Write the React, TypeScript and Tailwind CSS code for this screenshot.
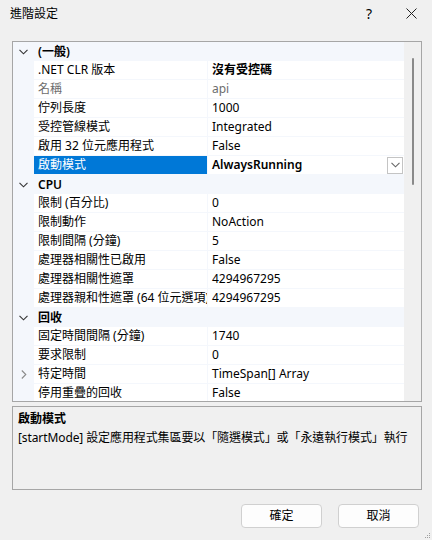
import React from 'react';

type Row =
  | { kind: 'cat'; title: string }
  | { kind: 'prop'; label: string; value: string; bold?: boolean; dim?: boolean; selected?: boolean; expandable?: boolean };

const rows: Row[] = [
  { kind: 'cat', title: '(一般)' },
  { kind: 'prop', label: '.NET CLR 版本', value: '沒有受控碼', bold: true },
  { kind: 'prop', label: '名稱', value: 'api', dim: true },
  { kind: 'prop', label: '佇列長度', value: '1000' },
  { kind: 'prop', label: '受控管線模式', value: 'Integrated' },
  { kind: 'prop', label: '啟用 32 位元應用程式', value: 'False' },
  { kind: 'prop', label: '啟動模式', value: 'AlwaysRunning', bold: true, selected: true },
  { kind: 'cat', title: 'CPU' },
  { kind: 'prop', label: '限制 (百分比)', value: '0' },
  { kind: 'prop', label: '限制動作', value: 'NoAction' },
  { kind: 'prop', label: '限制間隔 (分鐘)', value: '5' },
  { kind: 'prop', label: '處理器相關性已啟用', value: 'False' },
  { kind: 'prop', label: '處理器相關性遮罩', value: '4294967295' },
  { kind: 'prop', label: '處理器親和性遮罩 (64 位元選項)', value: '4294967295' },
  { kind: 'cat', title: '回收' },
  { kind: 'prop', label: '固定時間間隔 (分鐘)', value: '1740' },
  { kind: 'prop', label: '要求限制', value: '0' },
  { kind: 'prop', label: '特定時間', value: 'TimeSpan[] Array', expandable: true },
  { kind: 'prop', label: '停用重疊的回收', value: 'False' },
];

const font = { fontFamily: '"Segoe UI", "Noto Sans", "Noto Sans CJK TC", sans-serif' };

function ChevronDown({ color = '#555' }: { color?: string }) {
  return (
    <svg width="9" height="6" viewBox="0 0 9 6">
      <path d="M0.5 0.8 L4.5 4.8 L8.5 0.8" fill="none" stroke={color} strokeWidth="1.1" />
    </svg>
  );
}

function ChevronRight() {
  return (
    <svg width="6" height="9" viewBox="0 0 6 9">
      <path d="M0.8 0.5 L4.8 4.5 L0.8 8.5" fill="none" stroke="#8a8a8a" strokeWidth="1.1" />
    </svg>
  );
}

function GridRow({ row }: { row: Row }) {
  if (row.kind === 'cat') {
    return (
      <div className="flex h-[19px] shrink-0 items-center bg-[#f4f7fc]">
        <div className="flex w-[21px] shrink-0 items-center justify-center">
          <ChevronDown color="#333" />
        </div>
        <div className="pl-[4px] text-[12px] font-semibold leading-none text-black">{row.title}</div>
      </div>
    );
  }
  return (
    <div className="flex h-[19px] shrink-0">
      <div className="flex w-[21px] shrink-0 items-center justify-center bg-[#f4f7fc]">
        {row.expandable && <ChevronRight />}
      </div>
      <div
        className={`flex w-[174px] shrink-0 items-center overflow-hidden whitespace-nowrap border-b border-r border-[#f4f7fc] pl-[4px] text-[12px] ${
          row.selected ? 'bg-[#0078d7] text-white' : row.dim ? 'bg-white text-[#6d6d6d]' : 'bg-white text-black'
        }`}
      >
        {row.label}
      </div>
      <div
        className={`flex min-w-0 flex-1 items-center justify-between overflow-hidden whitespace-nowrap border-b border-[#f4f7fc] bg-white pl-[4px] pr-[1px] text-[12px] ${
          row.bold ? 'font-semibold' : ''
        } ${row.dim ? 'text-[#6d6d6d]' : 'text-black'}`}
      >
        <span>{row.value}</span>
        {row.selected && (
          <div className="flex h-[17px] w-[16px] items-center justify-center border border-[#c4c4c4] bg-white">
            <ChevronDown color="#666" />
          </div>
        )}
      </div>
    </div>
  );
}

export default function App() {
  return (
    <div className="relative h-[540px] w-[432px] overflow-hidden bg-[#f0f0f0] text-black" style={font}>
      {/* Title bar */}
      <div className="flex h-[27px] items-center justify-between pl-[10px] pr-[15px]">
        <span className="text-[12px]">進階設定</span>
        <div className="flex items-center gap-[34px]">
          <span className="text-[14px] leading-none">?</span>
          <svg width="11" height="11" viewBox="0 0 11 11">
            <path d="M0.5 0.5 L10.5 10.5 M10.5 0.5 L0.5 10.5" stroke="#222" strokeWidth="1" />
          </svg>
        </div>
      </div>

      <div className="flex flex-col px-[12px] pt-[14px]">
        {/* Property grid */}
        <div className="flex h-[361px] w-[410px] overflow-hidden border border-[#a6a6a6]">
          <div className="flex w-[391px] shrink-0 flex-col">
            {rows.map((r, i) => (
              <GridRow key={i} row={r} />
            ))}
          </div>
          <div className="flex flex-1 justify-center pt-[16px]">
            <div className="h-[127px] w-[2px] rounded-full bg-[#8a8a8a]" />
          </div>
        </div>

        {/* Description */}
        <div className="mt-[4px] h-[84px] w-[410px] border border-[#a6a6a6] px-[5px] pt-[2px] text-[12px] leading-[19px]">
          <div className="font-semibold">啟動模式</div>
          <div className="whitespace-nowrap tracking-[-0.1px]">[startMode] 設定應用程式集區要以「隨選模式」或「永遠執行模式」執行</div>
        </div>

        {/* Buttons */}
        <div className="mt-[14px] flex justify-end gap-[16px] pr-[1px]">
          <button className="flex h-[24px] w-[81px] items-center justify-center rounded-[4px] border border-[#d0d0d0] bg-[#fdfdfd] text-[12px]">
            確定
          </button>
          <button className="flex h-[24px] w-[81px] items-center justify-center rounded-[4px] border border-[#d0d0d0] bg-[#fdfdfd] text-[12px]">
            取消
          </button>
        </div>
      </div>

      {/* Resize grip */}
      <div className="absolute bottom-[2px] right-[2px] grid grid-cols-3 gap-[1px]">
        {[0, 0, 1, 0, 1, 1, 1, 1, 1].map((v, i) => (
          <div key={i} className={`h-[1px] w-[1px] ${v ? 'bg-[#a0a0a0]' : ''}`} />
        ))}
      </div>
    </div>
  );
}
